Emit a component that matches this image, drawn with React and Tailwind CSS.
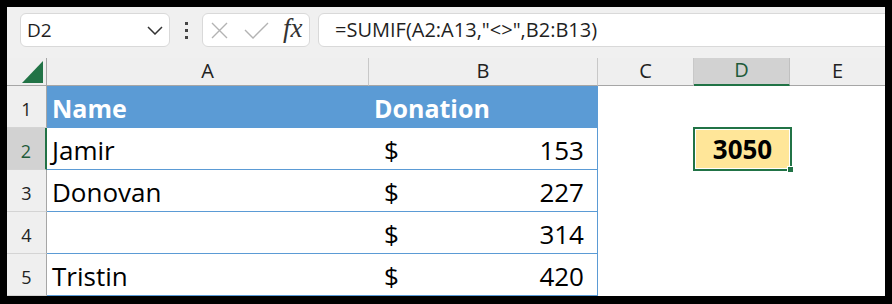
import React from "react";

const cols = [
  { key: "A", w: "w-[322px]" },
  { key: "B", w: "w-[229px]" },
  { key: "C", w: "w-[96px]" },
  { key: "D", w: "w-[96px]" },
  { key: "E", w: "flex-1" },
];

const rows = [
  { n: 1, name: "Name", amount: "Donation", header: true },
  { n: 2, name: "Jamir", amount: "153" },
  { n: 3, name: "Donovan", amount: "227" },
  { n: 4, name: "", amount: "314" },
  { n: 5, name: "Tristin", amount: "420" },
];

function Toolbar() {
  return (
    <div className="h-[51px] shrink-0 bg-[#f0f0f0] flex items-start pt-[6px] pl-[13px]">
      {/* name box */}
      <div className="w-[150px] h-[34px] bg-white border border-[#d9d9d9] rounded-[6px] flex items-center justify-between pl-[6px] pr-[6px]">
        <span className="text-[19px] text-[#1f1f1f]">D2</span>
        <svg width="16" height="9" viewBox="0 0 16 9" className="mt-[1px]">
          <polyline points="1,1 8,8 15,1" fill="none" stroke="#333" strokeWidth="1.5" />
        </svg>
      </div>
      {/* dots */}
      <div className="w-[32px] h-[34px] flex flex-col items-center justify-center gap-[4px]">
        <span className="w-[3px] h-[3px] bg-[#444]" />
        <span className="w-[3px] h-[3px] bg-[#444]" />
        <span className="w-[3px] h-[3px] bg-[#444]" />
      </div>
      {/* fx box */}
      <div className="w-[108px] h-[34px] bg-white border border-[#d9d9d9] rounded-[6px] flex items-center pl-[8px]">
        <svg width="17" height="17" viewBox="0 0 17 17">
          <path d="M1 1 L16 16 M16 1 L1 16" stroke="#b3b3b3" strokeWidth="1.4" fill="none" />
        </svg>
        <svg width="25" height="17" viewBox="0 0 25 17" className="ml-[16px]">
          <polyline points="1,8 9,16 24,1" fill="none" stroke="#b3b3b3" strokeWidth="1.4" />
        </svg>
        <span className="ml-[14px] text-[27px] leading-none italic text-[#333] font-['Liberation_Serif',serif] -mt-[3px]">fx</span>
      </div>
      {/* formula */}
      <div className="flex-1 ml-[8px] -mr-[4px] h-[34px] bg-white border border-[#d9d9d9] rounded-l-[6px] flex items-center pl-[16px]">
        <span className="text-[20px] text-[#1f1f1f]">=SUMIF(A2:A13,"&lt;&gt;",B2:B13)</span>
      </div>
    </div>
  );
}

function ColumnHeader() {
  return (
    <div className="h-[28px] shrink-0 flex bg-[#efefef]">
      <div className="w-[40px] shrink-0 border-r border-b border-[#a6a6a6] flex items-end justify-end pr-[3px] pb-[2px]">
        <svg width="21" height="22" viewBox="0 0 21 22">
          <polygon points="21,0 21,22 0,22" fill="#217346" />
        </svg>
      </div>
      {cols.map((c) => {
        const sel = c.key === "D";
        return (
          <div
            key={c.key}
            className={`${c.w} shrink-0 flex items-end justify-center pb-[4px] text-[20px] leading-none ${
              sel
                ? "bg-[#d2d2d2] border-b-2 border-[#217346] text-[#1e5b3a] border-r border-r-[#c0c0c0]"
                : "border-b border-[#a6a6a6] text-[#222] border-r border-r-[#c8c8c8]"
            } ${c.key === "E" ? "border-r-0" : ""}`}
          >
            {c.key}
          </div>
        );
      })}
    </div>
  );
}

function Row({ r }) {
  const selRow = r.n === 2;
  return (
    <div className="h-[42px] shrink-0 flex">
      <div
        className={`w-[40px] shrink-0 flex items-end justify-center pb-[9px] text-[18px] leading-none border-b border-[#d4d4d4] ${
          selRow
            ? "bg-[#d2d2d2] border-r-2 border-r-[#217346] text-[#1e5b3a]"
            : "bg-[#efefef] border-r border-r-[#a6a6a6] text-[#222]"
        }`}
      >
        {r.n}
      </div>
      {r.header ? (
        <>
          <div className="w-[322px] shrink-0 bg-[#5b9bd5] flex items-end pl-[5px] pb-[7px] text-[25px] leading-none font-bold text-white">
            {r.name}
          </div>
          <div className="w-[229px] shrink-0 bg-[#5b9bd5] flex items-end pl-[5px] pb-[7px] text-[25px] leading-none font-bold text-white">
            {r.amount}
          </div>
        </>
      ) : (
        <>
          <div className="w-[322px] shrink-0 border-b border-[#5b9bd5] flex items-end pl-[5px] pb-[6px] text-[26px] leading-none text-black">
            {r.name}
          </div>
          <div className="w-[229px] shrink-0 border-b border-r border-[#5b9bd5] flex items-end justify-between pl-[15px] pr-[13px] pb-[6px] text-[26px] leading-none text-black">
            <span>$</span>
            <span>{r.amount}</span>
          </div>
        </>
      )}
      <div className="w-[96px] shrink-0" />
      <div className="w-[96px] shrink-0 relative">
        {selRow && (
          <div className="absolute -top-[1px] -left-[1px] -right-[2px] -bottom-[1px] border-2 border-[#217346] bg-[#ffe699] shadow-[inset_0_0_0_1px_#ffffff] flex items-center justify-center">
            <span className="text-[26px] leading-none font-bold text-black">3050</span>
            <span className="absolute -right-[4px] -bottom-[4px] w-[7px] h-[7px] bg-[#217346] border border-white" />
          </div>
        )}
      </div>
      <div className="flex-1" />
    </div>
  );
}

export default function App() {
  return (
    <div className="w-[892px] h-[304px] bg-black pt-[7px] px-[7px] pb-[8px] font-['Open_Sans',sans-serif]">
      <div className="h-full flex flex-col bg-white overflow-hidden">
        <Toolbar />
        <ColumnHeader />
        {rows.map((r) => (
          <Row key={r.n} r={r} />
        ))}
      </div>
    </div>
  );
}
